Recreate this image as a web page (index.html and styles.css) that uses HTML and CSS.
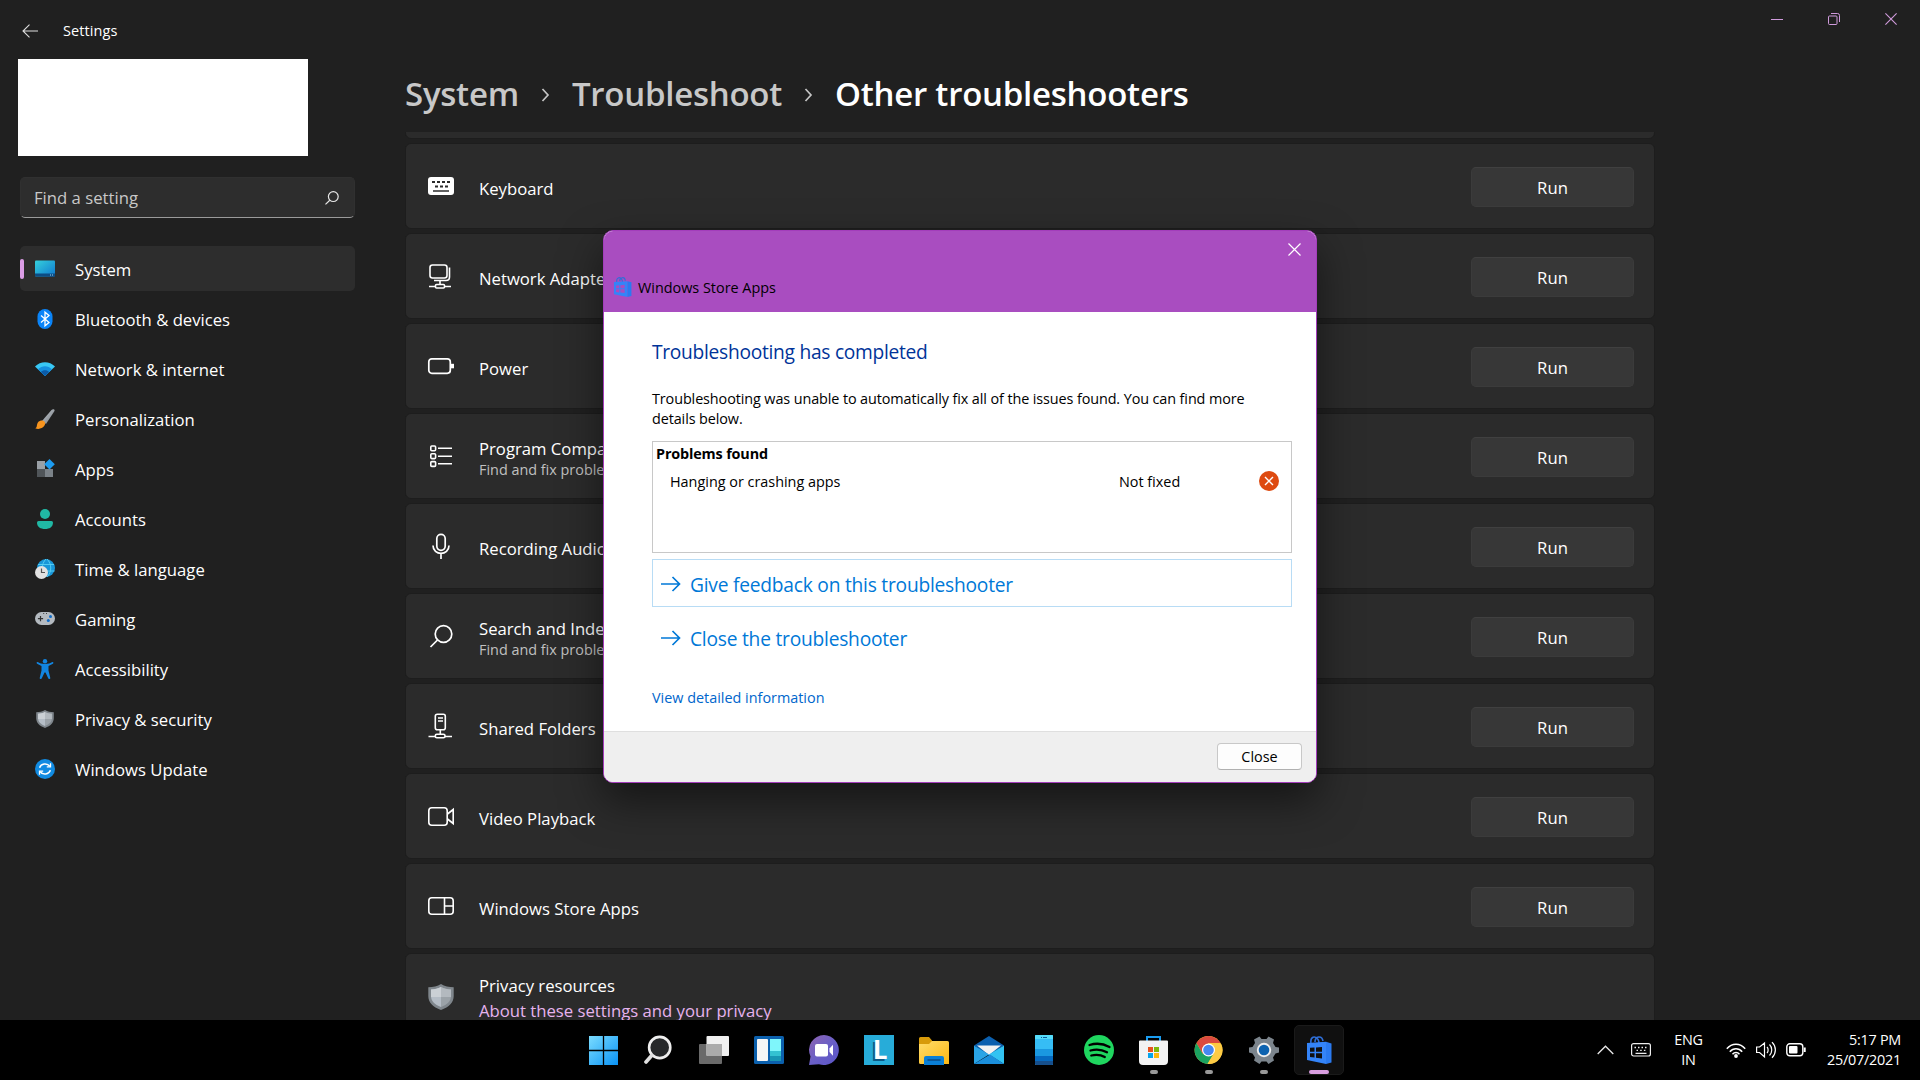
FILE: index.html
```html
<!DOCTYPE html>
<html lang="en">
<head>
  <meta charset="UTF-8" />
  <title>Settings</title>
  <link rel="stylesheet" href="styles.css">
</head>
<body>
  <!-- shared gradients and symbols -->
  <svg class="defs" width="0" height="0">
    <defs>
      <linearGradient id="gScreen" x1="0" y1="0" x2="1" y2="1"><stop offset="0" stop-color="#35d0dc"/><stop offset="1" stop-color="#0f78cf"/></linearGradient>
      <linearGradient id="gSteel" x1="0" y1="0" x2="1" y2="1"><stop offset="0" stop-color="#c6ccd2"/><stop offset="1" stop-color="#72787e"/></linearGradient>
      <linearGradient id="gWin" x1="0" y1="0" x2="1" y2="1"><stop offset="0" stop-color="#7bdcff"/><stop offset="1" stop-color="#0a93f5"/></linearGradient>
      <linearGradient id="gFolder" x1="0" y1="0" x2="1" y2="1"><stop offset="0" stop-color="#ffdc6b"/><stop offset="1" stop-color="#fcb813"/></linearGradient>
      <linearGradient id="gChat" x1="0" y1="0" x2="1" y2="1"><stop offset="0" stop-color="#8f63b0"/><stop offset=".5" stop-color="#6a5fc6"/><stop offset="1" stop-color="#5a55c8"/></linearGradient>
      <symbol id="shield" viewBox="0 0 26 26">
        <path d="M13 0c3.500 2.200 8 3.200 12.700 3.300V12c0 6.500-4.500 11-12.700 14C4.800 23 .3 18.500.3 12V3.300C5 3.200 9.500 2.200 13 0z" fill="#7f868c"/>
        <path d="M13 3c3 1.600 6 2.300 10 2.500V12c0 5-3.500 8.500-10 11z" fill="#9ba2a8"/>
        <path d="M13 3v20C6.500 20.500 3 17 3 12V5.500C7 5.300 10 4.600 13 3z" fill="#b5bdc6"/>
        <path d="M13 3v10H3V5.500C7 5.300 10 4.600 13 3z" fill="#cbd0d5"/>
        <path d="M13 3c3 1.600 6 2.300 10 2.500V13H13z" fill="#b3b9bf"/>
      </symbol>
      <symbol id="arrow" viewBox="0 0 20 18">
        <path d="M0 9h18.500M11.500 2l7 7-7 7" fill="none" stroke="#0078d7" stroke-width="1.700"/>
      </symbol>
      <symbol id="bag" viewBox="0 0 26 28">
        <path d="M5 7C4 1 9-1 12 3.500c1 1.500 1 3 1 4M9 6c0-6 7-7 8-1" fill="none" stroke="#2f6fd8" stroke-width="1.600"/>
        <path d="M1 7l19-1.200V28L1 24z" fill="#3484f8"/><path d="M20 5.800l5.500 1.600V26.500L20 28z" fill="#2a7af0"/>
        <path d="M4 11.800l4.500-.3v4.300H4zM10 11.400l6-.4v4.800h-6zM4 17.300h4.500v4.300L4 21zM10 17.300h6v5.200l-6-.7z" class="panes"/>
      </symbol>
    </defs>
  </svg>

  <div class="window">
    <header class="titlebar">
      <svg class="back" width="16" height="14" viewBox="0 0 16 14"><path d="M16 7H1M7.500.6L1 7l6.500 6.400" fill="none" stroke="#ddd" stroke-width="1.100"/></svg>
      <span class="app-title">Settings</span>
      <div class="controls">
        <svg width="12" height="12"><path d="M0 6.500h12" stroke="#d09bdc"/></svg>
        <svg width="12" height="12" fill="none" stroke="#d09bdc"><rect x=".5" y="3" width="8.500" height="8.500" rx="1"/><path d="M3 .5h6.500a2 2 0 0 1 2 2V9"/></svg>
        <svg width="12" height="12"><path d="M.4.4l11.200 11.200M11.600.4L.4 11.600" stroke="#d09bdc" stroke-width="1.100"/></svg>
      </div>
    </header>

    <aside class="sidebar">
      <div class="profile"></div>
      <div class="search">
        <span>Find a setting</span>
        <svg width="14" height="14" fill="none" stroke="#e6e6e6" stroke-width="1.200"><circle cx="8.300" cy="5.600" r="4.900"/><path d="M4.800 9.200L.5 13.400"/></svg>
      </div>
      <nav class="nav">
        <a class="nav-item active">
          <svg width="20" height="20"><rect y="1.500" width="20" height="16" rx="1" fill="url(#gScreen)"/><path d="M0 14.500h20v2a1 1 0 0 1-1 1H1a1 1 0 0 1-1-1z" fill="#0c4c84"/><path d="M15 16h1M17 16h1" stroke="#9fd6f5"/></svg>
          System
        </a>
        <a class="nav-item">
          <svg width="20" height="20"><rect x="2.500" width="15" height="20" rx="7.500" fill="#0a84f8"/><path d="M6 6.500l8 7-4 3.300V3.200l4 3.300-8 7" fill="none" stroke="#fff" stroke-width="1.300"/></svg>
          Bluetooth &amp; devices
        </a>
        <a class="nav-item">
          <svg width="20" height="20"><path d="M0 7.500C5.500 1.800 14.500 1.800 20 7.500L10 17z" fill="#38c8f5"/><path d="M3 10.200c4-3.900 10-3.900 14 0L10 17z" fill="#1590e0"/><path d="M5.800 13c2.400-2.200 6-2.200 8.400 0L10 17z" fill="#0b5ba8"/></svg>
          Network &amp; internet
        </a>
        <a class="nav-item">
          <svg width="20" height="20"><path d="M7 12L16.500 1c1.500-1.500 3.500-.8 3 1L11 15z" fill="url(#gSteel)"/><path d="M6 11.600c3-.8 5.300 2 3.500 5C7.500 20 3 20.500.3 19.300c2-1 1.200-2.500 2-4.500.6-1.700 2-2.900 3.700-3.200z" fill="#f7941e"/></svg>
          Personalization
        </a>
        <a class="nav-item">
          <svg width="20" height="20"><path d="M2 2h8v8H2z" fill="#9aa0a6"/><path d="M2 10h8v8H2z" fill="#505559"/><path d="M10 10h8v8h-8z" fill="#7b8288"/><path d="M14.500 0l5.300 5.300-5.300 5.300-5.300-5.300z" fill="#1d9cf0"/></svg>
          Apps
        </a>
        <a class="nav-item">
          <svg width="20" height="20" fill="#20b8a4"><circle cx="10" cy="5" r="5"/><path d="M3.500 12h13A1.500 1.500 0 0 1 18 13.500C18 18 14.500 20 10 20s-8-2-8-6.500A1.500 1.500 0 0 1 3.500 12z"/></svg>
          Accounts
        </a>
        <a class="nav-item">
          <svg width="20" height="20"><circle cx="11" cy="9" r="9" fill="#1996d8"/><path d="M3 5.500h16M3 12h16.500M11 0c-5 5-5 13 0 18M12 0c5 5 5 13 0 18" fill="none" stroke="#59d0f4" stroke-width=".9"/><circle cx="6.500" cy="13.500" r="6.500" fill="#e2e2e2"/><path d="M6.500 9.500v4h3.500" fill="none" stroke="#555" stroke-width="1.200"/></svg>
          Time &amp; language
        </a>
        <a class="nav-item">
          <svg width="20" height="20"><rect y="3" width="20" height="13" rx="6.500" fill="#b4bac0"/><path d="M5.500 7v5.200M2.900 9.600h5.200" stroke="#333" stroke-width="1.200"/><circle cx="15.500" cy="7.500" r="1.500" fill="#0f6cc8"/><circle cx="13.300" cy="11.500" r="1.500" fill="#0f6cc8"/><path d="M8.200 4.500h1M11 4.500h1" stroke="#444"/></svg>
          Gaming
        </a>
        <a class="nav-item">
          <svg width="20" height="20" fill="#1285e0"><circle cx="10" cy="2.200" r="2.200"/><path d="M2.600 3c2 1 4 2 7.400 2s5.400-1 7.400-2c1-.3 1.400 1.200.5 1.700L13.500 7v4.500L15.300 19c.2 1-1.600 1.400-2 .5L10.500 13.500h-1L6.700 19.500c-.4.900-2.200.5-2-.5l1.800-7.500V7L2.100 4.700c-.9-.5-.5-2 .5-1.700z"/></svg>
          Accessibility
        </a>
        <a class="nav-item">
          <svg width="20" height="20"><use href="#shield" x="1" y="1" width="18" height="18"/></svg>
          Privacy &amp; security
        </a>
        <a class="nav-item">
          <svg width="20" height="20"><circle cx="10" cy="10" r="10" fill="#118be2"/><path d="M4.600 8.700C6 4.500 12 3.500 14.800 7.300M15.400 11.300C14 15.500 8 16.500 5.200 12.700" fill="none" stroke="#fff" stroke-width="1.500"/><path d="M15.500 4.300v3.600h-3.700M4.500 15.700v-3.600h3.700" fill="none" stroke="#fff" stroke-width="1.300"/></svg>
          Windows Update
        </a>
      </nav>
    </aside>

    <main class="content">
      <h1 class="crumbs">
        <span class="crumb">System</span>
        <svg width="9" height="14"><path d="M1.500 1l5.500 6-5.500 6" fill="none" stroke="#c5c5c5" stroke-width="1.700"/></svg>
        <span class="crumb">Troubleshoot</span>
        <svg width="9" height="14"><path d="M1.500 1l5.500 6-5.500 6" fill="none" stroke="#c5c5c5" stroke-width="1.700"/></svg>
        <span class="crumb current">Other troubleshooters</span>
      </h1>
      <div class="cards">
        <div class="card"></div>
        <div class="card">
          <svg width="28" height="28"><rect x="1" y="4" width="26" height="18" rx="3" fill="#fff"/><path d="M5 9h3m2 0h3m2 0h3m2 0h3M8 13.500h3m2 0h3m2 0h3" stroke="#2b2b2b" stroke-width="2"/><path d="M6 18h16" stroke="#2b2b2b" stroke-width="1.500"/></svg>
          <div class="card-text"><p>Keyboard</p></div>
          <button class="run">Run</button>
        </div>
        <div class="card">
          <svg width="28" height="28" fill="none" stroke="#fff" stroke-width="1.600"><rect x="3" y="2" width="17" height="13" rx="2.500"/><path d="M22.500 4.500V14c0 2.500-1 3.500-3.500 3.500H7M13 17.500v4M2 23.500h6M17 23.500h7"/><rect x="8.500" y="21.500" width="9" height="3.500" rx="1"/></svg>
          <div class="card-text"><p>Network Adapter</p></div>
          <button class="run">Run</button>
        </div>
        <div class="card">
          <svg width="28" height="28" fill="none" stroke="#fff" stroke-width="1.700"><rect x="1.800" y="5.800" width="21.500" height="14.500" rx="3"/><path d="M25.500 10.800v4.500" stroke-width="3"/></svg>
          <div class="card-text"><p>Power</p></div>
          <button class="run">Run</button>
        </div>
        <div class="card">
          <svg width="28" height="28" fill="none" stroke="#fff" stroke-width="1.600"><rect x="3.800" y="3" width="4.800" height="4.800" rx="1"/><rect x="3.800" y="10.800" width="4.800" height="4.800" rx="1"/><rect x="3.800" y="18.600" width="4.800" height="4.800" rx="1"/><path d="M11 5.200h14M11 13.200h14M11 20.800h14"/></svg>
          <div class="card-text"><p>Program Compatibility Troubleshooter</p><small>Find and fix problems with running older programs on this version of Windows.</small></div>
          <button class="run">Run</button>
        </div>
        <div class="card">
          <svg width="28" height="28" fill="none" stroke="#fff" stroke-width="1.700"><rect x="9.800" y="1.300" width="8.400" height="16" rx="4.200"/><path d="M6 12.500c0 10.500 16 10.500 16 0M14 20.500v5.500"/></svg>
          <div class="card-text"><p>Recording Audio</p></div>
          <button class="run">Run</button>
        </div>
        <div class="card">
          <svg width="28" height="28" fill="none" stroke="#fff" stroke-width="1.700"><circle cx="16.500" cy="11" r="8.300"/><path d="M10.500 17L3.500 24"/></svg>
          <div class="card-text"><p>Search and Indexing</p><small>Find and fix problems with Windows Search</small></div>
          <button class="run">Run</button>
        </div>
        <div class="card">
          <svg width="28" height="28" fill="none" stroke="#fff" stroke-width="1.600"><rect x="8.300" y="1.300" width="10" height="15.500" rx="2"/><path d="M11 5h5M11 8h5M13.300 17v4M1.500 23.500h6.500M18 23.500h7"/><rect x="8.300" y="21.300" width="9.700" height="3.500" rx="1.500"/></svg>
          <div class="card-text"><p>Shared Folders</p></div>
          <button class="run">Run</button>
        </div>
        <div class="card">
          <svg width="28" height="28" fill="none" stroke="#fff" stroke-width="1.600"><rect x="1.800" y="4.800" width="18.400" height="17.400" rx="3"/><path d="M20.500 11l5.700-4.500v14L20.500 16"/></svg>
          <div class="card-text"><p>Video Playback</p></div>
          <button class="run">Run</button>
        </div>
        <div class="card">
          <svg width="28" height="28" fill="none" stroke="#fff" stroke-width="1.600"><rect x="1.800" y="4.800" width="24.400" height="16.400" rx="3"/><path d="M17.500 5v16M17.500 13H26"/></svg>
          <div class="card-text"><p>Windows Store Apps</p></div>
          <button class="run">Run</button>
        </div>
        <div class="card privacy">
          <svg width="28" height="28"><use href="#shield" x="1" y="1" width="26" height="26"/></svg>
          <div class="card-text"><p>Privacy resources</p><a>About these settings and your privacy</a></div>
        </div>
      </div>
    </main>
  </div>

  <div class="dialog">
    <div class="dialog-header">
      <svg class="dialog-x" width="13" height="13"><path d="M.5.500l12 12M12.500.5l-12 12" stroke="#fff" stroke-width="1.200"/></svg>
      <div class="dialog-title">
        <svg width="19" height="20" fill="#a94dc0"><use href="#bag" width="19" height="20"/></svg>
        <span>Windows Store Apps</span>
      </div>
    </div>
    <div class="dialog-body">
      <h2>Troubleshooting has completed</h2>
      <p class="summary">Troubleshooting was unable to automatically fix all of the issues found. You can find more<br>details below.</p>
      <div class="problems">
        <b>Problems found</b>
        <div class="problem">
          <span>Hanging or crashing apps</span>
          <span class="state">Not fixed</span>
          <svg width="20" height="20"><circle cx="10" cy="10" r="10" fill="#de4a10"/><path d="M6 6l8 8M14 6l-8 8" stroke="#fff" stroke-width="1.400"/></svg>
        </div>
      </div>
      <a class="command focused"><svg width="20" height="18"><use href="#arrow"/></svg>Give feedback on this troubleshooter</a>
      <a class="command"><svg width="20" height="18"><use href="#arrow"/></svg>Close the troubleshooter</a>
      <a class="details">View detailed information</a>
    </div>
    <div class="dialog-footer"><button>Close</button></div>
  </div>

  <footer class="taskbar">
    <div class="apps">
      <div class="task"><svg width="30" height="30" fill="url(#gWin)"><path d="M0 1H29V30H0z"/><path d="M14.500 0v30M0 15.500h30" stroke="#000" stroke-width="1.300"/></svg></div>
      <div class="task"><svg width="30" height="30"><circle cx="15.700" cy="12.500" r="10.600" fill="#26282a" stroke="#eee" stroke-width="2.600"/><path d="M7.700 20.500L2 27" stroke="#e0e0e0" stroke-width="3.600" stroke-linecap="round"/></svg></div>
      <div class="task"><svg width="30" height="30"><rect y="9" width="23" height="20" rx="1" fill="#6a6a6a"/><rect x="7.500" y="1" width="22.500" height="20" rx="1" fill="#f0f0f0"/><path d="M7.500 9H23v12H8.500a1 1 0 0 1-1-1z" fill="#ababab"/></svg></div>
      <div class="task"><svg width="30" height="30"><rect y="1" width="30" height="28" rx="1.500" fill="#0b60ad"/><rect x="3" y="4" width="11" height="22" rx="1" fill="#f6f6f6"/><path d="M16 4h11v12H16z" fill="#7ff6fb"/><path d="M16 16h11v5H16z" fill="#33c2d2"/><path d="M16 21h11v5H16z" fill="#1896b4"/></svg></div>
      <div class="task"><svg width="30" height="30"><path d="M15 0a15 15 0 1 1-5 29.200L0 30l1.500-8.500A15 15 0 0 1 15 0z" fill="url(#gChat)"/><rect x="6" y="9" width="13" height="12.500" rx="2" fill="#fff"/><path d="M20.500 13.500l3.500-3.700v11l-3.500-3.700z" fill="#fff"/></svg></div>
      <div class="task"><div class="lightshot">L</div></div>
      <div class="task"><svg width="30" height="30"><path d="M0 3.500A1.500 1.500 0 0 1 1.500 2H10l3 3.500V9H0z" fill="#d79a0a"/><path d="M0 9h10l3-3h15.500A1.500 1.500 0 0 1 30 7.500V29H1.500A1.500 1.500 0 0 1 0 27.500z" fill="url(#gFolder)"/><path d="M5 30v-7a2 2 0 0 1 2-2h16a2 2 0 0 1 2 2v7z" fill="#0a7fd6"/><path d="M9 25h12" stroke="#0b4c86" stroke-width="1.500" stroke-linecap="round"/></svg></div>
      <div class="task"><svg width="30" height="30"><path d="M0 10.500L15 1l15 9.500-15 10z" fill="#0b5fae"/><path d="M3 10.500h24L15 20z" fill="#f2f2f2"/><path d="M0 10.500l15 9L0 29z" fill="#2aa4e6"/><path d="M30 10.500V29L15 19.500z" fill="#32c3f2"/><path d="M0 29l16-9.500L30 29z" fill="#1b8fdc"/></svg></div>
      <div class="task"><svg width="18" height="30"><rect width="18" height="30" rx="1" fill="#36bdf5"/><path d="M0 14h18v7H0z" fill="#1a98e0"/><path d="M0 21h18v5H0z" fill="#066ac0"/><path d="M0 26h18v3a1 1 0 0 1-1 1H1a1 1 0 0 1-1-1z" fill="#164f8c"/><path d="M0 1a1 1 0 0 1 1-1h16a1 1 0 0 1 1 1v3H0z" fill="#55dcfa"/><path d="M6 2.500h1M8 2.500h4" stroke="#0b5b9c"/></svg></div>
      <div class="task"><svg width="30" height="30"><circle cx="15" cy="15" r="15" fill="#1fd65f"/><path d="M5.500 10c6.500-2 14-1.300 20 2M6.500 15.500c5.500-1.500 11.500-1 16.500 1.800M7.300 20.500c4.500-1.200 9.500-.8 13.500 1.500" fill="none" stroke="#000" stroke-width="2.300" stroke-linecap="round"/></svg></div>
      <div class="task open"><svg width="30" height="30"><path d="M8 7V2h13v5" fill="none" stroke="#1a9cf0" stroke-width="2"/><path d="M0 6.500a1 1 0 0 1 1-1h27a1 1 0 0 1 1 1V26a4 4 0 0 1-4 4H4a4 4 0 0 1-4-4z" fill="#f3f3f3"/><path d="M9 12h5v5H9z" fill="#e8531f"/><path d="M15 12h5v5h-5z" fill="#7fb80a"/><path d="M9 18h5v5H9z" fill="#05a4ec"/><path d="M15 18h5v5h-5z" fill="#fdb80c"/></svg></div>
      <div class="task open"><svg width="30" height="30"><circle cx="14.500" cy="15" r="13.900" fill="#fcc934"/><path d="M2.400 8A14 14 0 0 1 26.600 8H14.500l-6 10.500z" fill="#db4a3f"/><path d="M2.400 8A14 14 0 0 0 13.500 29L20 18.500H8.500z" fill="#1aa260"/><path d="M14.500 8.500h12.400A14 14 0 0 1 13.500 29L20 18z" fill="#fdcb44"/><circle cx="14.500" cy="15" r="6.500" fill="#fff"/><circle cx="14.500" cy="15" r="5.300" fill="#4688f1"/></svg></div>
      <div class="task open"><svg width="30" height="30"><path d="M10.500 1.500L12.500 4h5l2-2.500 5.500 3-1 3.500 2.500 4 3.500.5v5l-3.500 1-2.500 4 1 3-5.500 3.500-2-2.500h-5l-2 2.500-5.500-3.500 1-3-2.500-4L0 17.500v-5l3.500-.5L6 8 5 4.500z" fill="#7b848c"/><circle cx="15" cy="15" r="7.200" fill="#eee"/><circle cx="15" cy="15" r="5.300" fill="#0d63b0"/></svg></div>
      <div class="task open active"><svg width="26" height="28" fill="#101010"><use href="#bag" width="26" height="28"/></svg></div>
    </div>
    <div class="tray">
      <svg width="17" height="10"><path d="M.7 9L8.500 1.200 16.300 9" fill="none" stroke="#e8e8e8" stroke-width="1.300"/></svg>
      <svg width="20" height="14" fill="none" stroke="#eee"><rect x=".6" y=".6" width="18.800" height="12.400" rx="2" stroke-width="1.200"/><path d="M3.500 4.500h1.500m2 0h1.500m2 0h1.500m2 0h1.500M5.500 7.300h1.500m2.200 0h1.500m2.200 0h1.500M4.500 10.300h11" stroke-width="1.300"/></svg>
      <div class="lang">ENG<br>IN</div>
      <svg width="20" height="15" fill="none" stroke="#fff" stroke-width="1.500"><path d="M.8 5.800c5-6 13.400-6 18.400 0M3.800 8.700c3.500-4 8.900-4 12.400 0M6.500 11.300c2-2.300 5-2.300 7 0"/><circle cx="10" cy="13" r="1.900" fill="#fff" stroke="none"/></svg>
      <svg width="20" height="18" fill="none" stroke="#fff" stroke-width="1.200"><path d="M.6 6v5.500h3L8.500 16V2L3.600 6zM11 6c1.500 1.500 1.500 4.500 0 6M13.500 3.500c3 3 3 8 0 11M16 1.200c4.500 4.500 4.500 11.200 0 15.600"/></svg>
      <svg width="20" height="14" fill="none" stroke="#fff" stroke-width="1.400"><rect x=".8" y=".8" width="16" height="12" rx="3"/><rect x="3" y="3" width="8.500" height="7.600" rx="1" fill="#fff" stroke="none"/><path d="M18.700 4.500v4.500" stroke-width="2"/></svg>
      <div class="clock">5:17 PM<br>25/07/2021</div>
    </div>
  </footer>
</body>
</html>
```
FILE: styles.css
```css
* {
  box-sizing: border-box;
}

body {
  margin: 0;
  width: 1920px;
  height: 1080px;
  overflow: hidden;
  background: #000;
  color: #fff;
  font-family: "Open Sans", "Noto Sans", sans-serif;
  font-size: 16.7px;
}

svg {
  display: block;
  flex: none;
}

.defs {
  position: absolute;
}

h1, h2, p {
  margin: 0;
  font-weight: 400;
}

button {
  font: inherit;
  letter-spacing: inherit;
  padding: 0;
}

.window {
  display: grid;
  grid-template-columns: 405px 1fr;
  grid-template-rows: 59px 1fr;
  height: 1020px;
  background: #202020;
  overflow: hidden;
}

/* title bar */
.titlebar {
  grid-column: 1 / 3;
  display: flex;
  align-items: flex-start;
  padding: 0 23px 0 22px;
}

.back {
  margin-top: 24px;
}

.app-title {
  margin-left: 25px;
  margin-top: 20px;
  font-size: 14.5px;
  line-height: 22px;
  letter-spacing: 0.1px;
}

.controls {
  display: flex;
  gap: 45px;
  margin-left: auto;
  margin-top: 13px;
}

/* sidebar */
.profile {
  width: 290px;
  height: 97px;
  margin-left: 18px;
  background: #fff;
}

.search {
  display: flex;
  align-items: center;
  justify-content: space-between;
  width: 335px;
  height: 41px;
  margin: 21px 0 28px 20px;
  padding: 0 15px 0 13px;
  background: #2d2d2d;
  border: 1px solid #303030;
  border-bottom-color: #9a9a9a;
  border-radius: 5px;
  color: #c8c8c8;
}

.nav {
  display: flex;
  flex-direction: column;
  gap: 5px;
  width: 335px;
  margin-left: 20px;
}

.nav-item {
  display: flex;
  align-items: center;
  gap: 20px;
  height: 45px;
  padding-left: 15px;
  padding-top: 1px;
  border-radius: 5px;
}

.nav-item.active {
  position: relative;
  background: #2d2d2d;
}

.nav-item.active::before {
  content: "";
  position: absolute;
  left: 0;
  top: 13px;
  width: 4px;
  height: 20px;
  border-radius: 2px;
  background: #dc9de6;
}

/* content */
.content {
  display: flex;
  flex-direction: column;
  min-height: 0;
}

.crumbs {
  display: flex;
  align-items: center;
  height: 73px;
  padding-bottom: 4px;
  font-size: 33px;
  font-weight: 600;
  line-height: 44px;
  letter-spacing: -0.25px;
}

.crumbs svg {
  margin: 3px 22px 0 22px;
}

.crumb {
  color: #c8c8c8;
}

.crumb.current {
  color: #fff;
}

.cards {
  display: flex;
  flex-direction: column;
  gap: 4px;
  width: 1250px;
  height: 888px;
  overflow: hidden;
}

.card {
  display: flex;
  align-items: center;
  flex: none;
  height: 86px;
  padding: 2px 20px 0 21px;
  background: #2b2b2b;
  border: 1px solid #1d1d1d;
  border-radius: 6px;
}

.card:first-child {
  margin-top: -79px;
}

.card-text {
  margin-left: 24px;
  padding-top: 3px;
  line-height: 24px;
}

.card-text small {
  display: block;
  margin-top: -1px;
  margin-bottom: 2px;
  font-size: 14.4px;
  line-height: 19px;
  color: #c0c0c0;
}

.card-text a {
  display: block;
  margin-top: 1px;
  color: #e6b3ee;
}

.run {
  width: 163px;
  height: 40px;
  margin-left: auto;
  background: #373737;
  border: 1px solid #3b3b3b;
  border-top-color: #404040;
  border-radius: 5px;
  color: #fff;
}

.privacy {
  align-items: flex-start;
  padding-top: 29px;
}

.privacy .card-text {
  margin-top: -12px;
}

/* troubleshooter dialog */
.dialog {
  position: absolute;
  left: 603px;
  top: 230px;
  width: 714px;
  height: 553px;
  display: flex;
  flex-direction: column;
  background: #fff;
  border: 1px solid #a33dbb;
  border-radius: 10px;
  overflow: hidden;
  box-shadow: 0 18px 42px rgba(0, 0, 0, 0.5);
  color: #000;
  font-size: 14.4px;
}

.dialog-header {
  height: 81px;
  flex: none;
  padding: 12px 15px 0 9px;
  background: #a94dc0;
}

.dialog-x {
  margin-left: auto;
}

.dialog-title {
  display: flex;
  align-items: center;
  gap: 6px;
  margin-top: 21px;
}

.panes {
  fill: inherit;
}

.dialog-body {
  flex: 1;
  padding: 26px 24px 0 48px;
}

.dialog-body h2 {
  color: #003399;
  font-size: 19.2px;
  line-height: 28px;
  letter-spacing: -0.28px;
}

.summary {
  margin-top: 23px;
  line-height: 20px;
  padding-bottom: 12px;
  letter-spacing: -0.1px;
}

.problems {
  height: 112px;
  padding: 2px 12px 0 3px;
  border: 1px solid #c8c8c8;
  line-height: 20px;
}

.problems b {
  letter-spacing: -0.15px;
}

.problem {
  display: flex;
  align-items: center;
  margin-top: 6px;
  padding-left: 14px;
}

.problem span {
  padding-top: 2px;
}

.state {
  margin-left: auto;
  width: 140px;
}

.command {
  display: flex;
  align-items: center;
  gap: 9px;
  height: 48px;
  margin-top: 6px;
  padding-top: 2px;
  padding-left: 8px;
  border: 1px solid transparent;
  color: #0078d7;
  font-size: 19.2px;
  letter-spacing: -0.23px;
}

.command.focused {
  border-color: #b8dcf5;
}

.details {
  display: block;
  margin-top: 27px;
  line-height: 20px;
  color: #0066cc;
}

.dialog-footer {
  display: flex;
  justify-content: flex-end;
  height: 51px;
  padding: 11px 14px 0 0;
  background: #efefef;
  border-top: 1px solid #dfdfdf;
}

.dialog-footer button {
  width: 85px;
  height: 27px;
  background: #fdfdfd;
  border: 1px solid #c8c8c8;
  border-bottom-color: #b0b0b0;
  border-radius: 4px;
}

/* taskbar */
.taskbar {
  display: flex;
  align-items: center;
  justify-content: space-between;
  height: 60px;
  padding-left: 579px;
}

.apps {
  display: flex;
  gap: 5px;
}

.task {
  position: relative;
  display: flex;
  align-items: center;
  justify-content: center;
  width: 50px;
  height: 50px;
  border-radius: 5px;
}

.task.active {
  background: #101010;
  border: 1px solid #1a1a1a;
}

.task.open::after {
  content: "";
  position: absolute;
  left: 21px;
  bottom: 1px;
  width: 8px;
  height: 4px;
  border-radius: 2px;
  background: #999;
}

.task.active::after {
  left: 14px;
  bottom: 0;
  width: 20px;
  background: #d89de0;
}

.lightshot {
  width: 30px;
  height: 30px;
  padding-left: 2px;
  background: #27acd9;
  font-size: 26px;
  font-weight: 700;
  line-height: 28px;
  text-align: center;
  text-shadow: -2px 2px 0 #0c5a86;
}

.tray {
  display: flex;
  align-items: center;
  padding-right: 19px;
  font-size: 14.4px;
  line-height: 20px;
  letter-spacing: -0.25px;
}

.tray svg + svg {
  margin-left: 10px;
}

.tray svg:first-child + svg {
  margin-left: 17px;
}

.lang {
  width: 75px;
  text-align: center;
}

.clock {
  width: 95px;
  text-align: right;
}
```
